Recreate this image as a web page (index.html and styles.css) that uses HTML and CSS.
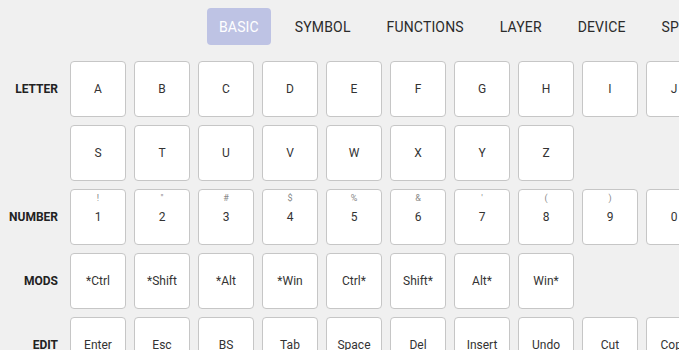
FILE: index.html
```html
<!DOCTYPE html>
<html>
<head>
  <title>Keymap</title>
  <link rel="stylesheet" href="styles.css">
</head>
<body>
  <div class="tabs">
    <div class="tab active">Basic</div>
    <div class="tab">Symbol</div>
    <div class="tab">Functions</div>
    <div class="tab">Layer</div>
    <div class="tab">Device</div>
    <div class="tab">Special</div>
  </div>

  <div class="groups">
    <div class="group">
      <div class="label">LETTER</div>
      <div class="rows">
        <div class="keys">
          <div class="key">A</div>
          <div class="key">B</div>
          <div class="key">C</div>
          <div class="key">D</div>
          <div class="key">E</div>
          <div class="key">F</div>
          <div class="key">G</div>
          <div class="key">H</div>
          <div class="key">I</div>
          <div class="key">J</div>
          <div class="key">K</div>
          <div class="key">L</div>
          <div class="key">M</div>
          <div class="key">N</div>
          <div class="key">O</div>
          <div class="key">P</div>
          <div class="key">Q</div>
          <div class="key">R</div>
        </div>
        <div class="keys">
          <div class="key">S</div>
          <div class="key">T</div>
          <div class="key">U</div>
          <div class="key">V</div>
          <div class="key">W</div>
          <div class="key">X</div>
          <div class="key">Y</div>
          <div class="key">Z</div>
        </div>
      </div>
    </div>

    <div class="group">
      <div class="label">NUMBER</div>
      <div class="rows">
        <div class="keys">
          <div class="key"><span class="shift">!</span>1</div>
          <div class="key"><span class="shift">"</span>2</div>
          <div class="key"><span class="shift">#</span>3</div>
          <div class="key"><span class="shift">$</span>4</div>
          <div class="key"><span class="shift">%</span>5</div>
          <div class="key"><span class="shift">&amp;</span>6</div>
          <div class="key"><span class="shift">'</span>7</div>
          <div class="key"><span class="shift">(</span>8</div>
          <div class="key"><span class="shift">)</span>9</div>
          <div class="key">0</div>
        </div>
      </div>
    </div>

    <div class="group">
      <div class="label">MODS</div>
      <div class="rows">
        <div class="keys">
          <div class="key">*Ctrl</div>
          <div class="key">*Shift</div>
          <div class="key">*Alt</div>
          <div class="key">*Win</div>
          <div class="key">Ctrl*</div>
          <div class="key">Shift*</div>
          <div class="key">Alt*</div>
          <div class="key">Win*</div>
        </div>
      </div>
    </div>

    <div class="group">
      <div class="label">EDIT</div>
      <div class="rows">
        <div class="keys">
          <div class="key">Enter</div>
          <div class="key">Esc</div>
          <div class="key">BS</div>
          <div class="key">Tab</div>
          <div class="key">Space</div>
          <div class="key">Del</div>
          <div class="key">Insert</div>
          <div class="key">Undo</div>
          <div class="key">Cut</div>
          <div class="key">Copy</div>
          <div class="key">Paste</div>
        </div>
      </div>
    </div>
  </div>
</body>
</html>
```

FILE: styles.css
```css
body {
  margin: 0;
  background-color: #f0f0f0;
  color: #333;
  font-family: Roboto, "Liberation Sans", sans-serif;
  overflow: hidden;
}

.tabs {
  display: flex;
  gap: 12px;
  padding: 8px 0 0 207px;
  white-space: nowrap;
}

.tab {
  height: 37px;
  padding: 0 12px;
  display: flex;
  align-items: center;
  font-size: 14px;
  letter-spacing: 0.15px;
  text-transform: uppercase;
  color: #2b2b2b;
  border-radius: 4px;
}

.tab.active {
  background-color: #bec3e4;
  color: #fff;
}

.groups {
  display: flex;
  flex-direction: column;
  gap: 8px;
  padding-top: 16px;
}

.group {
  display: flex;
  gap: 12px;
}

.label {
  width: 58px;
  flex-shrink: 0;
  height: 55px;
  display: flex;
  align-items: center;
  justify-content: flex-end;
  font-size: 12px;
  font-weight: bold;
  color: #222;
}

.rows {
  display: flex;
  flex-direction: column;
  gap: 8px;
}

.keys {
  display: flex;
  gap: 8px;
}

.key {
  width: 56px;
  height: 56px;
  flex-shrink: 0;
  box-sizing: border-box;
  border: 1px solid #c6c6c6;
  border-radius: 4px;
  background-color: #fff;
  display: flex;
  align-items: center;
  justify-content: center;
  font-size: 12px;
  color: #333;
  position: relative;
}

.shift {
  position: absolute;
  top: 3px;
  left: 0;
  right: 0;
  text-align: center;
  font-size: 9px;
  color: #888;
}
```
